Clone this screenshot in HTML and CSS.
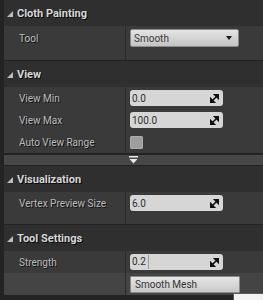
FILE: index.html
```html
<!DOCTYPE html>
<html>
<head>
<meta charset="utf-8">
<link rel="stylesheet" href="styles.css">
</head>
<body>
<div class="panel">
  <section class="cat">
    <div class="cat-head"><span class="tri"></span><span>Cloth Painting</span></div>
    <div class="row row-combo">
      <div class="name">Tool</div>
      <div class="val"><div class="combo"><span>Smooth</span><span class="caret"></span></div></div>
    </div>
    <div class="row foot"><div class="name"></div><div class="val"></div></div>
  </section>

  <section class="cat">
    <div class="cat-head"><span class="tri"></span><span>View</span></div>
    <div class="row">
      <div class="name">View Min</div>
      <div class="val"><div class="spin"><span>0.0</span><svg class="spin-ico" width="9" height="9" viewBox="0 0 9 9"><path d="M4 0H9V5Z M0 4V9H5Z M2.2 6.8L6.8 2.2" fill="#111" stroke="#111" stroke-width="1.6"/></svg></div></div>
    </div>
    <div class="row">
      <div class="name">View Max</div>
      <div class="val"><div class="spin"><span>100.0</span><svg class="spin-ico" width="9" height="9" viewBox="0 0 9 9"><path d="M4 0H9V5Z M0 4V9H5Z M2.2 6.8L6.8 2.2" fill="#111" stroke="#111" stroke-width="1.6"/></svg></div></div>
    </div>
    <div class="row">
      <div class="name">Auto View Range</div>
      <div class="val"><div class="check"></div></div>
    </div>
    <div class="expander"><svg width="9" height="8" viewBox="0 0 9 8"><rect x="0" y="0" width="9" height="1.5" fill="#e8e8e8"/><path d="M0.5 3H8.5L4.5 7.5Z" fill="#e8e8e8"/></svg></div>
  </section>

  <section class="cat">
    <div class="cat-head"><span class="tri"></span><span>Visualization</span></div>
    <div class="row">
      <div class="name">Vertex Preview Size</div>
      <div class="val"><div class="spin"><span>6.0</span><svg class="spin-ico" width="9" height="9" viewBox="0 0 9 9"><path d="M4 0H9V5Z M0 4V9H5Z M2.2 6.8L6.8 2.2" fill="#111" stroke="#111" stroke-width="1.6"/></svg></div></div>
    </div>
    <div class="row foot"><div class="name"></div><div class="val"></div></div>
  </section>

  <section class="cat">
    <div class="cat-head"><span class="tri"></span><span>Tool Settings</span></div>
    <div class="row">
      <div class="name">Strength</div>
      <div class="val"><div class="spin"><span class="editing">0.2</span><svg class="spin-ico" width="9" height="9" viewBox="0 0 9 9"><path d="M4 0H9V5Z M0 4V9H5Z M2.2 6.8L6.8 2.2" fill="#111" stroke="#111" stroke-width="1.6"/></svg></div></div>
    </div>
    <div class="row hover">
      <div class="name"></div>
      <div class="val"><div class="button">Smooth Mesh</div></div>
    </div>
  </section>
</div>
<div class="popup"></div>
</body>
</html>
```
FILE: styles.css
```css
html, body {
  margin: 0;
  padding: 0;
}
body {
  width: 263px;
  height: 300px;
  overflow: hidden;
  position: relative;
  background: #232323;
  font-family: Roboto, "Liberation Sans", sans-serif;
}
.panel {
  margin-left: 4px;
  display: flex;
  flex-direction: column;
  gap: 1px;
}
.cat {
  display: flex;
  flex-direction: column;
}
.cat-head {
  height: 26px;
  background: #2f2f2f;
  display: flex;
  align-items: center;
  gap: 4px;
  padding-left: 3px;
  color: #d6d6d6;
  font-weight: bold;
  font-size: 11px;
  text-shadow: 1px 1px 0 #0a0a0a;
}
.tri {
  width: 0;
  height: 0;
  border-style: solid;
  border-width: 0 0 6px 6px;
  border-color: transparent transparent #bcbcbc transparent;
  margin-top: 1px;
}
.row {
  display: grid;
  grid-template-columns: 122px 1fr;
  height: 22px;
  background: #3a3a3a;
}
.row-combo {
  height: 24px;
}
.foot {
  height: 10px;
}
.hover {
  background: #444444;
}
.name {
  border-right: 1px solid #2a2a2a;
  padding-left: 15px;
  display: flex;
  align-items: center;
  font-size: 10px;
  color: #bababa;
  text-shadow: 1px 1px 0 #141414;
  white-space: nowrap;
}
.val {
  display: flex;
  align-items: center;
  padding-left: 4px;
}
.combo {
  box-sizing: border-box;
  width: 109px;
  height: 18px;
  border: 1px solid #8a8a8a;
  border-radius: 2px;
  background: linear-gradient(#e4e4e4, #c4c4c4);
  display: flex;
  align-items: center;
  justify-content: space-between;
  padding: 0 6px 0 3px;
  font-size: 10px;
  color: #3a3a3a;
}
.caret {
  width: 0;
  height: 0;
  border-style: solid;
  border-width: 4px 3.5px 0 3.5px;
  border-color: #1a1a1a transparent transparent transparent;
}
.spin {
  box-sizing: border-box;
  width: 93px;
  height: 16px;
  border-radius: 3px;
  background: #d6d6d6;
  display: flex;
  align-items: center;
  justify-content: space-between;
  padding: 0 4px 0 2px;
  font-size: 10px;
  color: #2e2e2e;
}
.editing {
  padding-right: 2px;
  border-right: 1px solid #9a9a9a;
  height: 14px;
  line-height: 14px;
}
.check {
  width: 13px;
  height: 13px;
  border-radius: 2px;
  background: #9e9e9e;
  box-shadow: inset 0 0 0 1px #acacac;
}
.expander {
  margin-top: 2px;
  height: 10px;
  background: #474747;
  display: flex;
  align-items: center;
  justify-content: center;
}
.button {
  box-sizing: border-box;
  width: 110px;
  height: 17px;
  border: 1px solid #8a8a8a;
  border-radius: 1px;
  background: linear-gradient(#e6e6e6, #c8c8c8);
  display: flex;
  align-items: center;
  padding-left: 4px;
  font-size: 10px;
  color: #333;
}
.popup {
  position: absolute;
  left: 233px;
  top: 293px;
  width: 40px;
  height: 20px;
  background: #f2f2f2;
  border: 1px solid #5a5a5a;
}
```
